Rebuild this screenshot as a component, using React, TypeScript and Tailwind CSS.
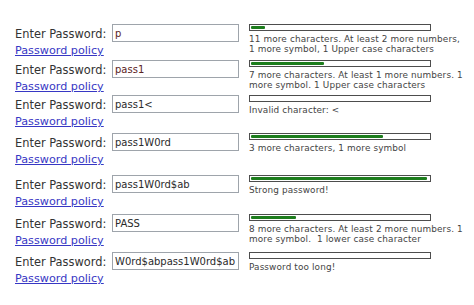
const rows = [
  {
    value: 'p',
    fill: 8,
    h: 'h-[36px]',
    ink: 'text-[#5a2323]',
    lines: ['11 more characters. At least 2 more numbers,', '1 more symbol, 1 Upper case characters'],
  },
  {
    value: 'pass1',
    fill: 41,
    h: 'h-[35px]',
    ink: 'text-[#5a2323]',
    lines: ['7 more characters. At least 1 more numbers. 1', 'more symbol. 1 Upper case characters'],
  },
  { value: 'pass1<', fill: 0, h: 'h-[38px]', ink: 'text-[#2a2a2a]', lines: ['Invalid character: <'] },
  { value: 'pass1W0rd', fill: 74, h: 'h-[42px]', ink: 'text-[#2a2a2a]', lines: ['3 more characters, 1 more symbol'] },
  { value: 'pass1W0rd$ab', fill: 99, h: 'h-[39px]', ink: 'text-[#2a2a2a]', lines: ['Strong password!'] },
  {
    value: 'PASS',
    fill: 25,
    h: 'h-[38px]',
    ink: 'text-[#2a2a2a]',
    lines: ['8 more characters. At least 2 more numbers. 1', 'more symbol.  1 lower case character'],
  },
  { value: 'W0rd$abpass1W0rd$ab', fill: 0, h: 'h-[38px]', ink: 'text-[#2a2a2a]', lines: ['Password too long!'] },
];

const App = () => {
  return (
    <div className="w-[474px] h-[305px] bg-white pt-[24px] font-['DejaVu_Sans',sans-serif] overflow-hidden">
      {rows.map((row, i) => (
        <div key={i} className={`flex ${row.h}`}>
          <div className="w-[249px] pl-[15px] shrink-0">
            <div className="flex items-center h-[18px]">
              <span className="w-[97px] text-[11.4px] text-[#333] pt-[3px]">Enter Password:</span>
              <input
                readOnly
                value={row.value}
                className={`w-[127px] h-[18px] border border-[#9ea4ab] pl-[2px] pr-0 text-[10px] ${row.ink} outline-none bg-white`}
              />
            </div>
            <a href="#" className="block text-[11.2px] leading-[13px] mt-[2px] text-[#3737c4] underline">
              Password policy
            </a>
          </div>
          <div>
            <div className="w-[182px] h-[7px] border border-[#4d4d4d] p-px bg-white">
              <div className="h-full bg-[#1d7d1d] rounded-[1px]" style={{ width: `${row.fill}%` }} />
            </div>
            <div className="mt-[3px] text-[8.9px] leading-[10px] tracking-[0.12px] text-[#444] whitespace-pre">
              {row.lines.map((l, j) => (
                <div key={j}>{l}</div>
              ))}
            </div>
          </div>
        </div>
      ))}
    </div>
  );
};

export default App;
